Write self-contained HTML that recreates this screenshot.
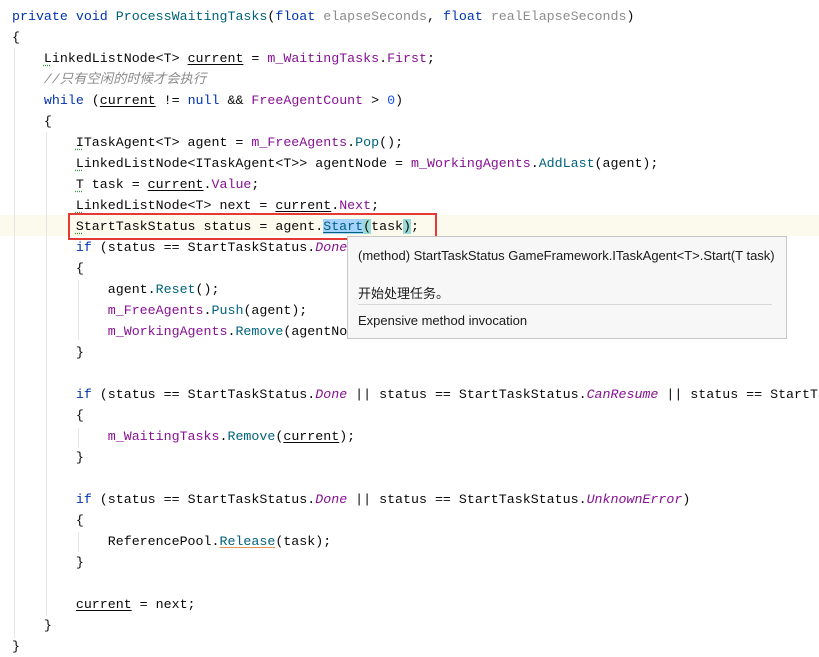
<!DOCTYPE html>
<html><head><meta charset="utf-8">
<style>
html,body{margin:0;padding:0;background:#fff;}
body{width:819px;height:650px;overflow:hidden;position:relative;font-family:"Liberation Mono","Noto Sans CJK SC",monospace;font-size:13.3px;color:#080808;}
.code{position:absolute;left:12px;top:5.5px;width:807px;overflow:hidden;}
.l{height:21px;line-height:21px;white-space:pre;}
.k{color:#0033b3}
.f{color:#871094}
.m{color:#00627a}
.c{color:#8c8c8c;font-style:italic}
.n{color:#1750eb}
.p{color:#8c8c8c}
.i{color:#871094;font-style:italic}
.u{text-decoration:underline;text-underline-offset:2px}
.d{text-decoration:underline dotted #3a9b3a;text-underline-offset:3px}
.ru{text-decoration:underline;text-decoration-color:#e0955a;text-underline-offset:2px}
.hl{position:absolute;left:0;top:215px;width:819px;height:21px;background:#fcfaed;}
.guide{position:absolute;width:1px;background:#e6e6e6;}
.box{position:absolute;left:68px;top:213px;width:369px;height:27px;border:2px solid #e53935;box-sizing:border-box;}
.sel{background:#a6d2ff}
.br{background:#99dcd6}
.tip{position:absolute;left:347px;top:236px;width:440px;height:103px;background:#f7f7f7;border:1px solid #c6c6c6;box-sizing:border-box;font-family:"Liberation Sans","Noto Sans CJK SC",sans-serif;font-size:13px;color:#1a1a1a;}
.tip div{position:absolute;left:10px;}
.sep{position:absolute;left:10px;right:14px;top:67px;height:1px;background:#d8d8d8;}
</style></head><body>
<div class="hl"></div>
<div class="guide" style="left:14px;top:48px;height:590px"></div>
<div class="guide" style="left:46px;top:132px;height:484px"></div>
<div class="guide" style="left:78px;top:280px;height:60px"></div>
<div class="guide" style="left:78px;top:428px;height:20px"></div>
<div class="guide" style="left:78px;top:532px;height:20px"></div>
<div class="code"><div class="l"><span class="k">private void</span> <span class="m">ProcessWaitingTasks</span>(<span class="k">float</span> <span class="p">elapseSeconds</span>, <span class="k">float</span> <span class="p">realElapseSeconds</span>)</div><div class="l">{</div><div class="l">    <span class="d">L</span>inkedListNode&lt;T&gt; <span class="u">current</span> = <span class="f">m_WaitingTasks</span>.<span class="f">First</span>;</div><div class="l">    <span class="c">//只有空闲的时候才会执行</span></div><div class="l">    <span class="k">while</span> (<span class="u">current</span> != <span class="k">null</span> &amp;&amp; <span class="f">FreeAgentCount</span> &gt; <span class="n">0</span>)</div><div class="l">    {</div><div class="l">        <span class="d">I</span>TaskAgent&lt;T&gt; agent = <span class="f">m_FreeAgents</span>.<span class="m">Pop</span>();</div><div class="l">        <span class="d">L</span>inkedListNode&lt;ITaskAgent&lt;T&gt;&gt; agentNode = <span class="f">m_WorkingAgents</span>.<span class="m">AddLast</span>(agent);</div><div class="l">        <span class="d">T</span> task = <span class="u">current</span>.<span class="f">Value</span>;</div><div class="l">        <span class="d">L</span>inkedListNode&lt;T&gt; next = <span class="u">current</span>.<span class="f">Next</span>;</div><div class="l">        <span class="d">S</span>tartTaskStatus status = agent.<span class="m u sel">Start</span><span class="br">(</span>task<span class="br">)</span>;</div><div class="l">        <span class="k">if</span> (status == StartTaskStatus.<span class="i">Done</span> || status == StartTaskStatus.<span class="i">UnknownError</span>)</div><div class="l">        {</div><div class="l">            agent.<span class="m">Reset</span>();</div><div class="l">            <span class="f">m_FreeAgents</span>.<span class="m">Push</span>(agent);</div><div class="l">            <span class="f">m_WorkingAgents</span>.<span class="m">Remove</span>(agentNode);</div><div class="l">        }</div><div class="l"> </div><div class="l">        <span class="k">if</span> (status == StartTaskStatus.<span class="i">Done</span> || status == StartTaskStatus.<span class="i">CanResume</span> || status == StartTaskStatus.<span class="i">HasToWait</span>)</div><div class="l">        {</div><div class="l">            <span class="f">m_WaitingTasks</span>.<span class="m">Remove</span>(<span class="u">current</span>);</div><div class="l">        }</div><div class="l"> </div><div class="l">        <span class="k">if</span> (status == StartTaskStatus.<span class="i">Done</span> || status == StartTaskStatus.<span class="i">UnknownError</span>)</div><div class="l">        {</div><div class="l">            ReferencePool.<span class="m ru">Release</span>(task);</div><div class="l">        }</div><div class="l"> </div><div class="l">        <span class="u">current</span> = next;</div><div class="l">    }</div><div class="l">}</div></div>
<div class="box"></div>
<div class="tip">
<div style="top:11px">(method) StartTaskStatus GameFramework.ITaskAgent&lt;T&gt;.Start(T task)</div>
<div style="top:46px">开始处理任务。</div>
<span class="sep"></span>
<div style="top:76px">Expensive method invocation</div>
</div>
</body></html>
